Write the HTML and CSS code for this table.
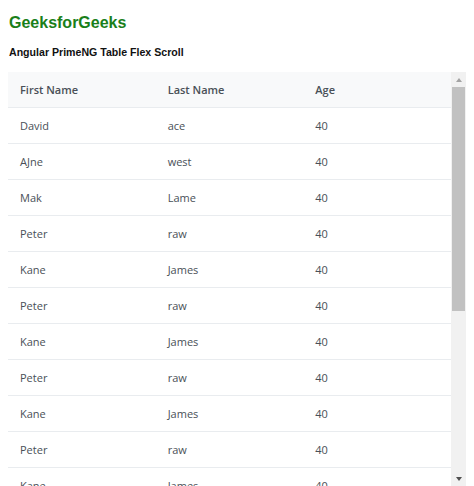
FILE: index.html
```html
<!DOCTYPE html>
<html lang="en">
<head>
<meta charset="UTF-8">
<meta name="viewport" content="width=device-width, initial-scale=1.0">
<title>Table Flex Scroll</title>
<link rel="stylesheet" href="styles.css">
</head>
<body>

<h2 class="brand">GeeksforGeeks</h2>
<h5 class="subtitle">Angular PrimeNG Table Flex Scroll</h5>

<div class="table-wrap">
    <div class="table-body">
        <table class="data-table">
            <thead>
                <tr><th>First Name</th><th>Last Name</th><th>Age</th></tr>
            </thead>
            <tbody>
                <tr><td>David</td><td>ace</td><td>40</td></tr>
                <tr><td>AJne</td><td>west</td><td>40</td></tr>
                <tr><td>Mak</td><td>Lame</td><td>40</td></tr>
                <tr><td>Peter</td><td>raw</td><td>40</td></tr>
                <tr><td>Kane</td><td>James</td><td>40</td></tr>
                <tr><td>Peter</td><td>raw</td><td>40</td></tr>
                <tr><td>Kane</td><td>James</td><td>40</td></tr>
                <tr><td>Peter</td><td>raw</td><td>40</td></tr>
                <tr><td>Kane</td><td>James</td><td>40</td></tr>
                <tr><td>Peter</td><td>raw</td><td>40</td></tr>
                <tr><td>Kane</td><td>James</td><td>40</td></tr>
            </tbody>
        </table>
    </div>
    <div class="scrollbar">
        <div class="arrow up"></div>
        <div class="track">
            <div class="thumb"></div>
        </div>
        <div class="arrow down"></div>
    </div>
</div>

</body>
</html>
```

FILE: styles.css
```css
html, body {
    height: 100%;
}

body {
    margin: 0 8px;
    font-family: "Liberation Sans", Arial, sans-serif;
    background-color: #fff;
    display: flex;
    flex-direction: column;
    overflow: hidden;
}

.brand {
    color: #1a7f1a;
    font-size: 16px;
    margin: 13px 0 0 1px;
    line-height: 19px;
}

.subtitle {
    font-size: 10.6px;
    margin: 14px 0 0 1px;
    line-height: 13px;
    color: #111;
}

.table-wrap {
    flex: 1;
    display: flex;
    margin-top: 13px;
    min-height: 0;
}

.table-body {
    flex: 1;
    overflow: hidden;
}

.data-table {
    width: 100%;
    border-collapse: collapse;
    table-layout: fixed;
    font-family: "Open Sans", sans-serif;
    font-size: 11px;
    color: #495057;
}

.data-table th {
    text-align: left;
    font-weight: 600;
    background-color: #f8f9fa;
    border-bottom: 1px solid #e9ecef;
    padding: 0 12px;
    height: 35px;
}

.data-table td {
    padding: 0 12px;
    height: 35px;
    border-bottom: 1px solid #e9ecef;
}

.scrollbar {
    width: 15px;
    background-color: #f1f1f1;
    display: flex;
    flex-direction: column;
}

.arrow {
    height: 15px;
    display: flex;
    justify-content: center;
    align-items: center;
}

.arrow::before {
    content: "";
    border-left: 3.5px solid transparent;
    border-right: 3.5px solid transparent;
}

.arrow.up::before {
    border-bottom: 4px solid #a3a3a3;
}

.arrow.down::before {
    border-top: 4px solid #505050;
}

.track {
    flex: 1;
}

.thumb {
    height: 224px;
    margin: 0 1px;
    background-color: #c1c1c1;
}
```
